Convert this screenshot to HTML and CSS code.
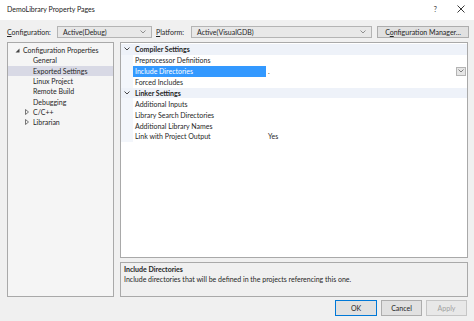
FILE: index.html
```html
<!DOCTYPE html>
<html lang="en">
<head>
    <meta charset="UTF-8">
    <title>DemoLibrary Property Pages</title>
    <link rel="stylesheet" href="styles.css">
</head>
<body>
    <div class="dialog">
        <div class="titlebar">
            <span class="title">DemoLibrary Property Pages</span>
            <span class="help">?</span>
            <svg class="close" width="8" height="8" viewBox="0 0 8 8"><path d="M0.5 0.5 L7.5 7.5 M7.5 0.5 L0.5 7.5" stroke="#222" stroke-width="0.9" fill="none"/></svg>
        </div>

        <div class="toolbar">
            <span class="label label-config"><u>C</u>onfiguration:</span>
            <div class="combo combo-config">
                <span>Active(Debug)</span>
                <svg class="chevron" width="6" height="4" viewBox="0 0 6 4"><polyline points="0.5 0.5 3 3 5.5 0.5" fill="none" stroke="#777" stroke-width="0.8"/></svg>
            </div>
            <span class="label label-platform"><u>P</u>latform:</span>
            <div class="combo combo-platform">
                <span>Active(VisualGDB)</span>
                <svg class="chevron" width="6" height="4" viewBox="0 0 6 4"><polyline points="0.5 0.5 3 3 5.5 0.5" fill="none" stroke="#777" stroke-width="0.8"/></svg>
            </div>
            <button class="btn btn-manager">C<u>o</u>nfiguration Manager...</button>
        </div>

        <div class="main">
            <!-- Left tree -->
            <div class="tree">
                <div class="tree-row level-0">
                    <svg class="expander" width="5" height="5" viewBox="0 0 5 5"><polygon points="0.5 4.5 4.5 4.5 4.5 0.5" fill="#444"/></svg>
                    <span>Configuration Properties</span>
                </div>
                <div class="tree-row level-1"><span>General</span></div>
                <div class="tree-row level-1 selected"><span>Exported Settings</span></div>
                <div class="tree-row level-1"><span>Linux Project</span></div>
                <div class="tree-row level-1"><span>Remote Build</span></div>
                <div class="tree-row level-1"><span>Debugging</span></div>
                <div class="tree-row level-1 collapsed">
                    <svg class="expander" width="4" height="6" viewBox="0 0 4 6"><polygon points="0.5 0.5 3.5 3 0.5 5.5" fill="none" stroke="#555" stroke-width="0.8"/></svg>
                    <span>C/C++</span>
                </div>
                <div class="tree-row level-1 collapsed">
                    <svg class="expander" width="4" height="6" viewBox="0 0 4 6"><polygon points="0.5 0.5 3.5 3 0.5 5.5" fill="none" stroke="#555" stroke-width="0.8"/></svg>
                    <span>Librarian</span>
                </div>
            </div>

            <div class="pane">
                <!-- Property grid -->
                <div class="grid">
                    <div class="grid-row category">
                        <div class="gutter"><svg width="6" height="4" viewBox="0 0 6 4"><polyline points="0.5 0.5 3 3 5.5 0.5" fill="none" stroke="#333" stroke-width="0.9"/></svg></div>
                        <div class="name">Compiler Settings</div>
                    </div>
                    <div class="grid-row">
                        <div class="gutter"></div>
                        <div class="name">Preprocessor Definitions</div>
                        <div class="value"></div>
                    </div>
                    <div class="grid-row selected">
                        <div class="gutter"></div>
                        <div class="name">Include Directories</div>
                        <div class="value">
                            <span>.</span>
                            <div class="value-drop"><svg width="6" height="4" viewBox="0 0 6 4"><polyline points="0.5 0.5 3 3 5.5 0.5" fill="none" stroke="#666" stroke-width="0.8"/></svg></div>
                        </div>
                    </div>
                    <div class="grid-row">
                        <div class="gutter"></div>
                        <div class="name">Forced Includes</div>
                        <div class="value"></div>
                    </div>
                    <div class="grid-row category">
                        <div class="gutter"><svg width="6" height="4" viewBox="0 0 6 4"><polyline points="0.5 0.5 3 3 5.5 0.5" fill="none" stroke="#333" stroke-width="0.9"/></svg></div>
                        <div class="name">Linker Settings</div>
                    </div>
                    <div class="grid-row">
                        <div class="gutter"></div>
                        <div class="name">Additional Inputs</div>
                        <div class="value"></div>
                    </div>
                    <div class="grid-row">
                        <div class="gutter"></div>
                        <div class="name">Library Search Directories</div>
                        <div class="value"></div>
                    </div>
                    <div class="grid-row">
                        <div class="gutter"></div>
                        <div class="name">Additional Library Names</div>
                        <div class="value"></div>
                    </div>
                    <div class="grid-row">
                        <div class="gutter"></div>
                        <div class="name">Link with Project Output</div>
                        <div class="value">Yes</div>
                    </div>
                </div>

                <!-- Description -->
                <div class="desc">
                    <div class="desc-title">Include Directories</div>
                    <div class="desc-text">Include directories that will be defined in the projects referencing this one.</div>
                </div>
            </div>
        </div>

        <div class="footer">
            <button class="btn btn-ok">OK</button>
            <button class="btn btn-cancel">Cancel</button>
            <button class="btn btn-apply" disabled>Apply</button>
        </div>
    </div>
</body>
</html>
```

FILE: styles.css
```css
* {
  box-sizing: border-box;
}

body {
  margin: 0;
  padding: 0;
  font-family: 'Lato', 'Noto Sans', sans-serif;
  font-size: 7px;
  color: #262626;
  background: #f0f0f0;
}

.dialog {
  width: 474px;
  height: 321px;
  background: #f0f0f0;
  display: flex;
  flex-direction: column;
  overflow: hidden;
}

/* Title bar */
.titlebar {
  height: 20px;
  background: #ffffff;
  display: flex;
  align-items: center;
  padding: 0 9px 2px 7px;
}

.title {
  flex: 1;
  color: #222;
}

.help {
  margin-right: 20px;
  font-size: 7px;
  color: #333;
}

.close {
  display: block;
}

/* Configuration row */
.toolbar {
  height: 22px;
  display: flex;
  align-items: flex-start;
  padding: 6px 5px 0 7px;
}

.label {
  height: 12px;
  line-height: 12px;
}

.label-config {
  width: 50px;
}

.label-platform {
  width: 35px;
  margin-left: 4px;
}

.combo {
  height: 12px;
  background: #e8e8e8;
  border: 1px solid #b4b4b4;
  display: flex;
  align-items: center;
  padding: 0 5px 0 5px;
}

.combo span {
  flex: 1;
}

.combo-config {
  width: 95px;
}

.combo-platform {
  width: 181px;
}

.btn {
  font-family: inherit;
  font-size: 7px;
  color: #262626;
  background: #e1e1e1;
  border: 1px solid #adadad;
  padding: 0;
  height: 12px;
  line-height: 10px;
}

.btn-manager {
  width: 92px;
  margin-left: 5px;
}

/* Main area */
.main {
  height: 255px;
  display: flex;
  padding: 0 6px 0 7px;
}

.tree {
  width: 107px;
  background: #f5f5f5;
  border: 1px solid #a9a9a9;
  padding-top: 2px;
}

.tree-row {
  height: 10.3px;
  display: flex;
  align-items: center;
  white-space: nowrap;
}

.tree-row.level-0 {
  padding-left: 7px;
}

.tree-row.level-0 .expander {
  margin-right: 3px;
}

.tree-row.level-1 {
  padding-left: 25px;
}

.tree-row.collapsed {
  padding-left: 17px;
}

.tree-row.collapsed .expander {
  margin-right: 4px;
}

.tree-row.selected {
  background: #d8d9e5;
}

.pane {
  width: 348px;
  margin-left: 6px;
  display: flex;
  flex-direction: column;
}

/* Property grid */
.grid {
  flex: 1;
  background: #ffffff;
  border: 1px solid #a9a9a9;
  padding-top: 1px;
}

.grid-row {
  height: 10.875px;
  display: flex;
  align-items: stretch;
  white-space: nowrap;
}

.gutter {
  width: 12px;
  background: #f3f6fb;
  display: flex;
  align-items: center;
  justify-content: center;
}

.grid-row .name {
  width: 133px;
  padding-left: 2px;
  display: flex;
  align-items: center;
}

.grid-row .value {
  flex: 1;
  display: flex;
  align-items: center;
  padding-left: 2px;
  padding-right: 1px;
}

.grid-row .value span {
  flex: 1;
}

.grid-row.category {
  background: #eef2f9;
}

.grid-row.category .gutter {
  background: transparent;
}

.grid-row.category .name {
  font-weight: bold;
  width: auto;
}

.grid-row.selected .name {
  background: #3399ff;
  color: #ffffff;
}

.value-drop {
  width: 10px;
  height: 9px;
  background: #e6e6e6;
  border: 1px solid #b4b4b4;
  display: flex;
  align-items: center;
  justify-content: center;
}

/* Description */
.desc {
  height: 35px;
  margin-top: 4px;
  border: 1px solid #a9a9a9;
  background: #f0f0f0;
  padding: 1px 3px;
}

.desc-title {
  font-weight: bold;
  height: 10px;
  line-height: 10px;
}

.desc-text {
  height: 11px;
  line-height: 11px;
}

/* Footer buttons */
.footer {
  display: flex;
  justify-content: flex-end;
  padding: 3px 7px 0 0;
}

.footer .btn {
  height: 16px;
  line-height: 14px;
  margin-left: 4px;
}

.btn-ok {
  width: 42px;
  border: 1px solid #0078d7;
}

.btn-cancel {
  width: 41px;
}

.btn-apply {
  width: 41px;
  color: #a0a0a0;
  background: #e8e8e8;
  border-color: #c6c6c6;
}
```
